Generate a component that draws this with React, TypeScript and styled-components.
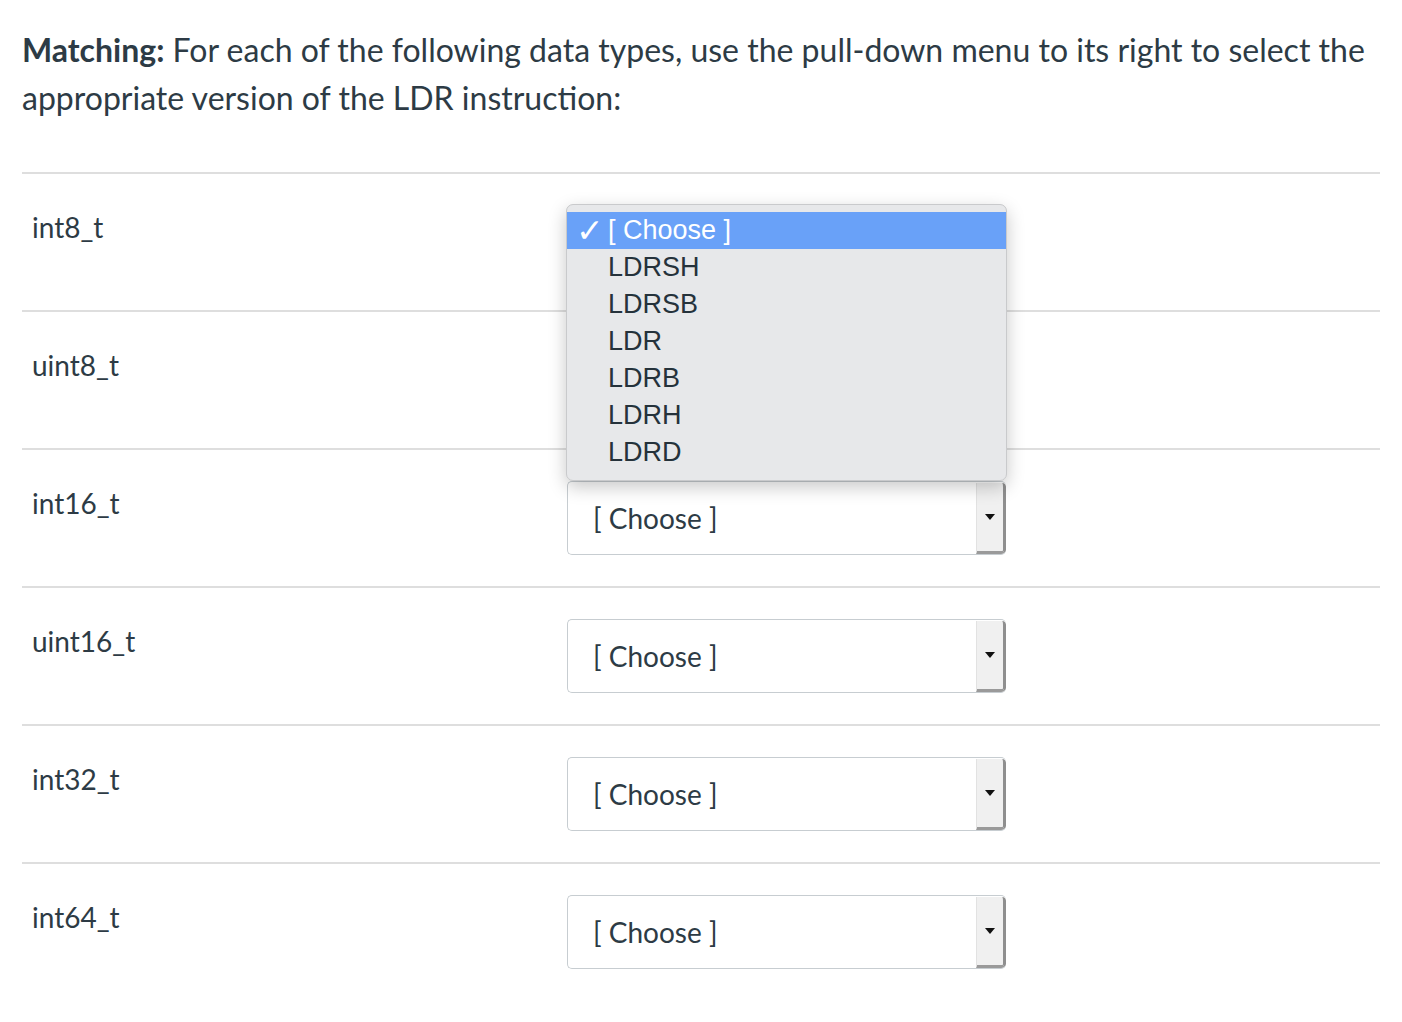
import React from "react";
import styled, { createGlobalStyle } from "styled-components";

const GlobalStyle = createGlobalStyle`
  html, body { margin: 0; padding: 0; background: #ffffff; }
  body { font-family: Lato, "Open Sans", sans-serif; color: #2d3b45; }
`;

const Page = styled.div`
  padding: 26px 22px 0 22px;
  width: 1358px;
`;

const Heading = styled.p`
  margin: 0;
  font-size: 32px;
  line-height: 48px;
  color: #2d3b45;
  strong { font-weight: 700; }
`;

const List = styled.div`
  margin-top: 50px;
`;

const Row = styled.div`
  display: grid;
  grid-template-columns: 545px 439px;
  border-top: 2px solid #dedede;
  padding: 31px 0 31px 0;
`;

const Label = styled.div`
  padding: 3px 0 0 10px;
  font-size: 28px;
  line-height: 38px;
  color: #2d3b45;
`;

const SelectWrap = styled.div`
  position: relative;
`;

const SelectBox = styled.div`
  box-sizing: border-box;
  height: 74px;
  width: 439px;
  border: 1px solid #c7cdd1;
  border-right: none;
  border-radius: 5px;
  background: #ffffff;
  display: flex;
  align-items: stretch;
  overflow: hidden;
`;

const SelectText = styled.div`
  flex: 1;
  display: flex;
  align-items: center;
  padding-left: 25px;
  font-size: 28px;
  color: #2d3b45;
`;

const ArrowButton = styled.div`
  box-sizing: border-box;
  width: 30px;
  margin: 1px 0 0 0;
  background: #f0f0f0;
  border-left: 1px solid #e2e2e2;
  border-right: 3px solid #8f8f8f;
  border-bottom: 3px solid #9a9a9a;
  border-top-right-radius: 4px;
  border-bottom-right-radius: 4px;
  display: flex;
  align-items: center;
  justify-content: center;
`;

const Menu = styled.div`
  position: absolute;
  top: -1px;
  left: -1px;
  width: 441px;
  box-sizing: border-box;
  padding: 7px 0 9px 0;
  background: #e7e8ea;
  border: 1px solid #c9cacc;
  border-radius: 7px;
  box-shadow: 0 6px 18px rgba(0, 0, 0, 0.22);
  z-index: 10;
  font-family: "Liberation Sans", Arial, sans-serif;
`;

const MenuItem = styled.div<{ $active?: boolean }>`
  position: relative;
  height: 37px;
  line-height: 37px;
  padding-left: 41px;
  font-size: 27px;
  color: ${(p) => (p.$active ? "#ffffff" : "#25323b")};
  background: ${(p) => (p.$active ? "#69a1f8" : "transparent")};
`;

const Check = styled.span`
  position: absolute;
  left: 9px;
  top: 0;
  font-size: 33px;
  line-height: 37px;
  font-weight: 700;
  font-family: "DejaVu Sans", sans-serif;
`;

const Arrow = () => (
  <svg width="10" height="6" viewBox="0 0 10 6">
    <polygon points="0,0 10,0 5,6" fill="#111" />
  </svg>
);

const types = ["int8_t", "uint8_t", "int16_t", "uint16_t", "int32_t", "int64_t"];
const options = ["LDRSH", "LDRSB", "LDR", "LDRB", "LDRH", "LDRD"];

const Select: React.FC<{ open?: boolean }> = ({ open }) => (
  <SelectWrap>
    <SelectBox>
      <SelectText>[ Choose ]</SelectText>
      <ArrowButton>
        <Arrow />
      </ArrowButton>
    </SelectBox>
    {open && (
      <Menu>
        <MenuItem $active>
          <Check>✓</Check>[ Choose ]
        </MenuItem>
        {options.map((o) => (
          <MenuItem key={o}>{o}</MenuItem>
        ))}
      </Menu>
    )}
  </SelectWrap>
);

export default function App() {
  return (
    <>
      <GlobalStyle />
      <Page>
        <Heading>
          <strong>Matching:</strong> For each of the following data types, use the pull-down menu to its right to select the appropriate version of the LDR instruction:
        </Heading>
        <List>
          {types.map((t, i) => (
            <Row key={t}>
              <Label>{t}</Label>
              <Select open={i === 0} />
            </Row>
          ))}
        </List>
      </Page>
    </>
  );
}
